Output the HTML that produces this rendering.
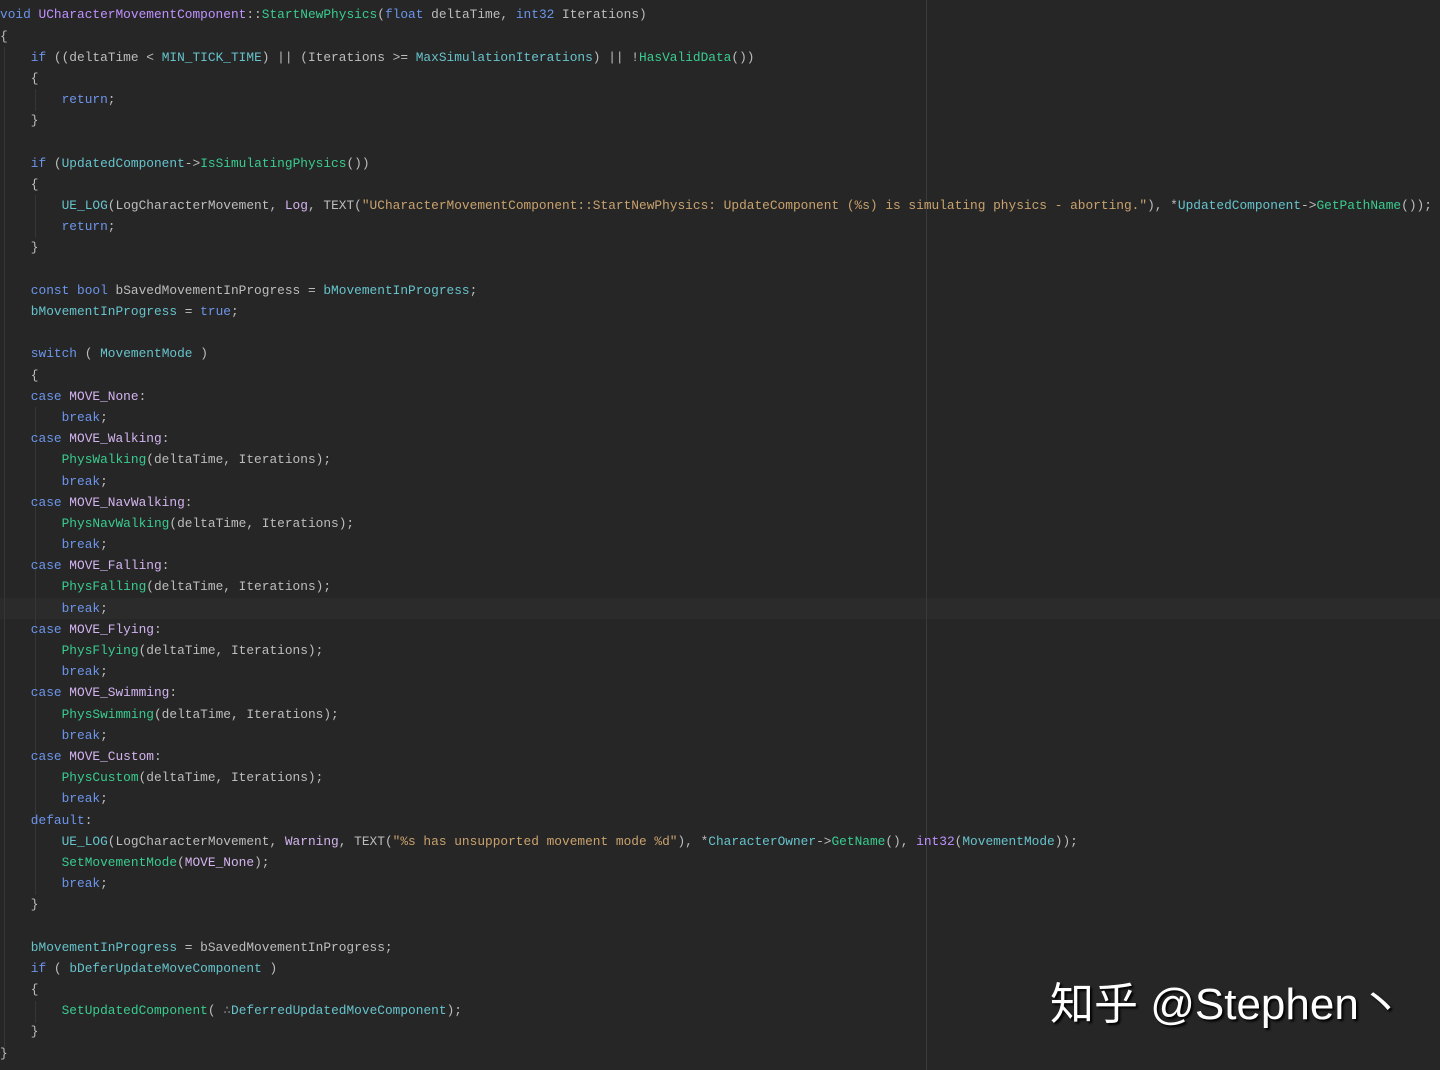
<!DOCTYPE html>
<html><head><meta charset="utf-8"><style>
html,body{margin:0;padding:0;background:#262626;width:1440px;height:1070px;overflow:hidden;position:relative}
pre{margin:0;position:absolute;left:0;top:4.4px;font-family:"Liberation Mono",monospace;font-size:12.83px;line-height:21.18px;color:#bdbdbd;white-space:pre}
.k{color:#6c95eb}.c{color:#c191ff}.f{color:#39cc8f}.m{color:#66c3cc}.s{color:#c9a26d}.e{color:#d3b4f0}.d{color:#777}
.hl{position:absolute;left:0;top:597.5px;width:1440px;height:21.2px;background:#2b2b2b}
.vl{position:absolute;left:926px;top:0;width:1px;height:1070px;background:#3a3a3a}
.g{position:absolute;width:1px;background:#363636}
.wm{position:absolute;left:1050px;top:968px;font-family:"Liberation Sans","Noto Sans CJK SC",sans-serif;font-size:44px;color:#fff;text-shadow:2px 2px 2px #000;letter-spacing:0px}
</style></head><body>
<div class="hl"></div>
<div class="vl"></div>
<div class="g" style="left:35px;top:89px;height:22px"></div>
<div class="g" style="left:35px;top:195px;height:43px"></div>
<div class="g" style="left:35px;top:407px;height:488px"></div>
<div class="g" style="left:35px;top:1001px;height:22px"></div>
<div class="g" style="left:4px;top:47px;height:1000px"></div>
<pre><span class="k">void</span> <span class="c">UCharacterMovementComponent</span>::<span class="f">StartNewPhysics</span>(<span class="k">float</span> deltaTime, <span class="k">int32</span> Iterations)
{
    <span class="k">if</span> ((deltaTime &lt; <span class="m">MIN_TICK_TIME</span>) || (Iterations &gt;= <span class="m">MaxSimulationIterations</span>) || !<span class="f">HasValidData</span>())
    {
        <span class="k">return</span>;
    }

    <span class="k">if</span> (<span class="m">UpdatedComponent</span>-&gt;<span class="f">IsSimulatingPhysics</span>())
    {
        <span class="m">UE_LOG</span>(LogCharacterMovement, <span class="e">Log</span>, TEXT(<span class="s">"UCharacterMovementComponent::StartNewPhysics: UpdateComponent (%s) is simulating physics - aborting."</span>), *<span class="m">UpdatedComponent</span>-&gt;<span class="f">GetPathName</span>());
        <span class="k">return</span>;
    }

    <span class="k">const</span> <span class="k">bool</span> bSavedMovementInProgress = <span class="m">bMovementInProgress</span>;
    <span class="m">bMovementInProgress</span> = <span class="k">true</span>;

    <span class="k">switch</span> ( <span class="m">MovementMode</span> )
    {
    <span class="k">case</span> <span class="e">MOVE_None</span>:
        <span class="k">break</span>;
    <span class="k">case</span> <span class="e">MOVE_Walking</span>:
        <span class="f">PhysWalking</span>(deltaTime, Iterations);
        <span class="k">break</span>;
    <span class="k">case</span> <span class="e">MOVE_NavWalking</span>:
        <span class="f">PhysNavWalking</span>(deltaTime, Iterations);
        <span class="k">break</span>;
    <span class="k">case</span> <span class="e">MOVE_Falling</span>:
        <span class="f">PhysFalling</span>(deltaTime, Iterations);
        <span class="k">break</span>;
    <span class="k">case</span> <span class="e">MOVE_Flying</span>:
        <span class="f">PhysFlying</span>(deltaTime, Iterations);
        <span class="k">break</span>;
    <span class="k">case</span> <span class="e">MOVE_Swimming</span>:
        <span class="f">PhysSwimming</span>(deltaTime, Iterations);
        <span class="k">break</span>;
    <span class="k">case</span> <span class="e">MOVE_Custom</span>:
        <span class="f">PhysCustom</span>(deltaTime, Iterations);
        <span class="k">break</span>;
    <span class="k">default</span>:
        <span class="m">UE_LOG</span>(LogCharacterMovement, <span class="e">Warning</span>, TEXT(<span class="s">"%s has unsupported movement mode %d"</span>), *<span class="m">CharacterOwner</span>-&gt;<span class="f">GetName</span>(), <span class="c">int32</span>(<span class="m">MovementMode</span>));
        <span class="f">SetMovementMode</span>(<span class="e">MOVE_None</span>);
        <span class="k">break</span>;
    }

    <span class="m">bMovementInProgress</span> = bSavedMovementInProgress;
    <span class="k">if</span> ( <span class="m">bDeferUpdateMoveComponent</span> )
    {
        <span class="f">SetUpdatedComponent</span>( <span class="d">&#x2234;</span><span class="m">DeferredUpdatedMoveComponent</span>);
    }
}</pre>
<div class="wm">知乎 @Stephen丶</div>
</body></html>
